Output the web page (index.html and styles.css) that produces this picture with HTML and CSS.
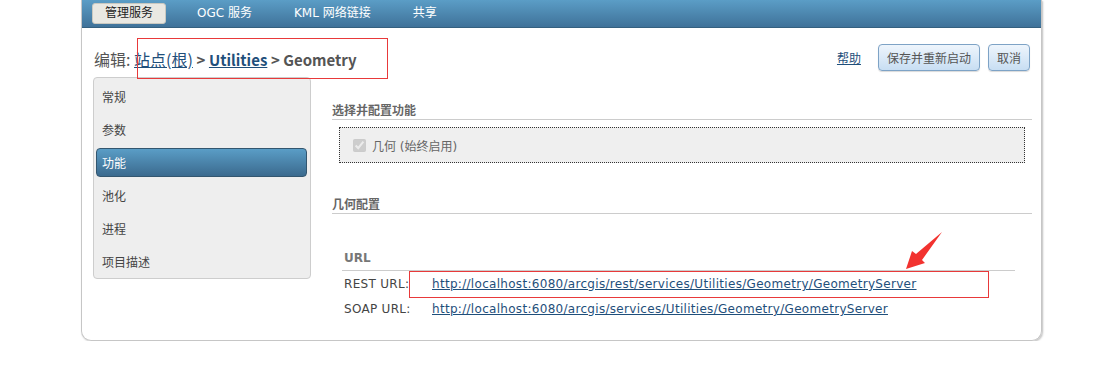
FILE: index.html
```html
<!DOCTYPE html>
<html lang="zh-CN">
<head>
    <meta charset="UTF-8">
    <title>编辑服务 - Geometry</title>
    <link rel="stylesheet" href="styles.css">
</head>
<body>
    <!-- Page frame -->
    <div class="page">
        <!-- Top tabs -->
        <div class="topnav">
            <a href="#" class="tab active">管理服务</a>
            <a href="#" class="tab">OGC 服务</a>
            <a href="#" class="tab">KML 网络链接</a>
            <a href="#" class="tab">共享</a>
        </div>

        <!-- Title row -->
        <div class="header">
            <h1 class="crumbs">编辑: <a href="#" class="crumb-root">站点(根)</a> <b>&gt;</b> <a href="#" class="crumb-link">Utilities</a> <b>&gt; Geometry</b></h1>
            <div class="header-actions">
                <a href="#" class="help-link">帮助</a>
                <button class="btn">保存并重新启动</button>
                <button class="btn">取消</button>
            </div>
        </div>

        <div class="content">
            <!-- Side menu -->
            <div class="sidebar">
                <a href="#" class="side-item">常规</a>
                <a href="#" class="side-item">参数</a>
                <a href="#" class="side-item selected">功能</a>
                <a href="#" class="side-item">池化</a>
                <a href="#" class="side-item">进程</a>
                <a href="#" class="side-item">项目描述</a>
            </div>

            <!-- Main panel -->
            <div class="main">
                <h2 class="section-title">选择并配置功能</h2>
                <div class="feature-box">
                    <label class="feature">
                        <input type="checkbox" checked disabled>
                        <span>几何 (始终启用)</span>
                    </label>
                </div>

                <h2 class="section-title second">几何配置</h2>
                <table class="url-table">
                    <thead>
                        <tr><th colspan="2">URL</th></tr>
                    </thead>
                    <tbody>
                        <tr>
                            <td class="url-label">REST URL:</td>
                            <td><a href="#" class="url-link">http://localhost:6080/arcgis/rest/services/Utilities/Geometry/GeometryServer</a></td>
                        </tr>
                        <tr>
                            <td class="url-label">SOAP URL:</td>
                            <td><a href="#" class="url-link">http://localhost:6080/arcgis/services/Utilities/Geometry/GeometryServer</a></td>
                        </tr>
                    </tbody>
                </table>
            </div>
        </div>
    </div>

    <!-- Annotations drawn over the screenshot -->
    <div class="mark mark-title"></div>
    <div class="mark mark-rest"></div>
    <svg class="mark-arrow" width="50" height="50" viewBox="0 0 50 50">
        <polygon points="46,2 26,30 29,33 10,39 16,21 20,24" fill="#f2322f"/>
    </svg>
</body>
</html>
```

FILE: styles.css
```css
/* General */
body {
    margin: 0;
    font-family: "DejaVu Sans", "Noto Sans CJK SC", sans-serif;
    font-size: 12px;
    color: #444;
    background-color: #fff;
}

a {
    color: #1f4f7b;
}

/* Page frame */
.page {
    margin-left: 81px;
    width: 959px;
    height: 340px;
    border: 1px solid #c6c6c6;
    border-top: none;
    border-radius: 0 0 10px 10px;
    box-shadow: 1px 1px 2px rgba(0, 0, 0, 0.25);
}

/* Top tabs */
.topnav {
    height: 28px;
    padding-left: 10px;
    display: flex;
    align-items: center;
    gap: 20px;
    background: linear-gradient(#5b9dc6, #3f7299);
    border-bottom: 1px solid #34607f;
    box-sizing: border-box;
}

.tab {
    font-family: "DejaVu Sans", "Noto Sans CJK SC", sans-serif;
    font-size: 12px;
    color: #fff;
    text-decoration: none;
    padding: 0 11px;
    line-height: 19px;
    border-radius: 3px;
}

.tab.active {
    background-color: #e9e8e2;
    color: #222;
    border: 1px solid #c9c8c0;
    padding: 0 12px;
}

/* Title row */
.header {
    height: 49px;
    padding: 10px 11px 0 12px;
    display: flex;
    justify-content: space-between;
    align-items: center;
    box-sizing: border-box;
}

.crumbs {
    margin: 0;
    padding-top: 3px;
    font-family: "Noto Sans CJK SC", sans-serif;
    font-size: 16px;
    font-weight: normal;
    color: #555;
}

.crumbs a {
    color: #1f4f7b;
}

.crumb-link,
.crumbs b {
    font-size: 15px;
    font-weight: bold;
}

.header-actions {
    display: flex;
    align-items: center;
    gap: 8px;
}

.help-link {
    font-family: "Noto Sans CJK SC", sans-serif;
    font-size: 12px;
    margin-right: 9px;
}

.btn {
    font-family: "Noto Sans CJK SC", sans-serif;
    font-size: 12px;
    color: #555;
    height: 27px;
    padding: 0 8px;
    background: linear-gradient(#eef5fc, #c8def3);
    border: 1px solid #7ea3c6;
    border-radius: 4px;
    box-shadow: 0 1px 1px rgba(0, 0, 0, 0.15);
}

/* Content */
.content {
    display: flex;
    gap: 21px;
    padding-left: 11px;
}

/* Side menu */
.sidebar {
    width: 216px;
    height: 196px;
    padding-top: 4px;
    background-color: #eee;
    border: 1px solid #cdcdcd;
    border-radius: 4px;
    display: flex;
    flex-direction: column;
}

.side-item {
    font-family: "Noto Sans CJK SC", sans-serif;
    font-size: 12px;
    color: #444;
    text-decoration: none;
    height: 33px;
    line-height: 29px;
    padding-left: 8px;
    flex-shrink: 0;
}

.side-item.selected {
    margin: 0 3px 4px 2px;
    height: 29px;
    line-height: 27px;
    padding-left: 5px;
    color: #fff;
    background: linear-gradient(#5a9dc6, #3b6a8e);
    border: 1px solid #33566f;
    border-radius: 4px;
    box-sizing: border-box;
}

/* Main panel */
.main {
    width: 700px;
    padding-top: 24px;
}

.section-title {
    margin: 0;
    font-family: "Noto Sans CJK SC", sans-serif;
    font-size: 12px;
    font-weight: bold;
    color: #666;
    padding-bottom: 1px;
    border-bottom: 1px solid #ccc;
}

.section-title.second {
    margin-top: 32px;
}

.feature-box {
    margin: 7px 7px 0 7px;
    height: 34px;
    padding-left: 13px;
    display: flex;
    align-items: center;
    background-color: #efefef;
    border: 1px dotted #333;
}

.feature {
    display: flex;
    align-items: center;
    gap: 6px;
    font-family: "DejaVu Sans", "Noto Sans CJK SC", sans-serif;
    font-size: 12px;
    color: #666;
}

.feature input {
    margin: 0;
    width: 13px;
    height: 13px;
}

/* URL table */
.url-table {
    margin: 37px 0 0 10px;
    width: 673px;
    border-collapse: collapse;
}

.url-table th {
    text-align: left;
    font-size: 12px;
    font-weight: bold;
    color: #777;
    padding: 0 0 5px 2px;
    border-bottom: 1px solid #ccc;
}

.url-table td {
    font-size: 12px;
    letter-spacing: 0.3px;
    line-height: 17px;
    padding: 5px 0 3px 2px;
}

.url-label {
    width: 86px;
    color: #444;
    letter-spacing: 0;
}

.url-link {
    color: #1f4f7b;
}

/* Annotations */
.mark {
    position: absolute;
    border: 1px solid #e8393a;
    box-sizing: border-box;
}

.mark-title {
    left: 137px;
    top: 38px;
    width: 251px;
    height: 41px;
}

.mark-rest {
    left: 409px;
    top: 271px;
    width: 580px;
    height: 27px;
}

.mark-arrow {
    position: absolute;
    left: 896px;
    top: 230px;
}
```
